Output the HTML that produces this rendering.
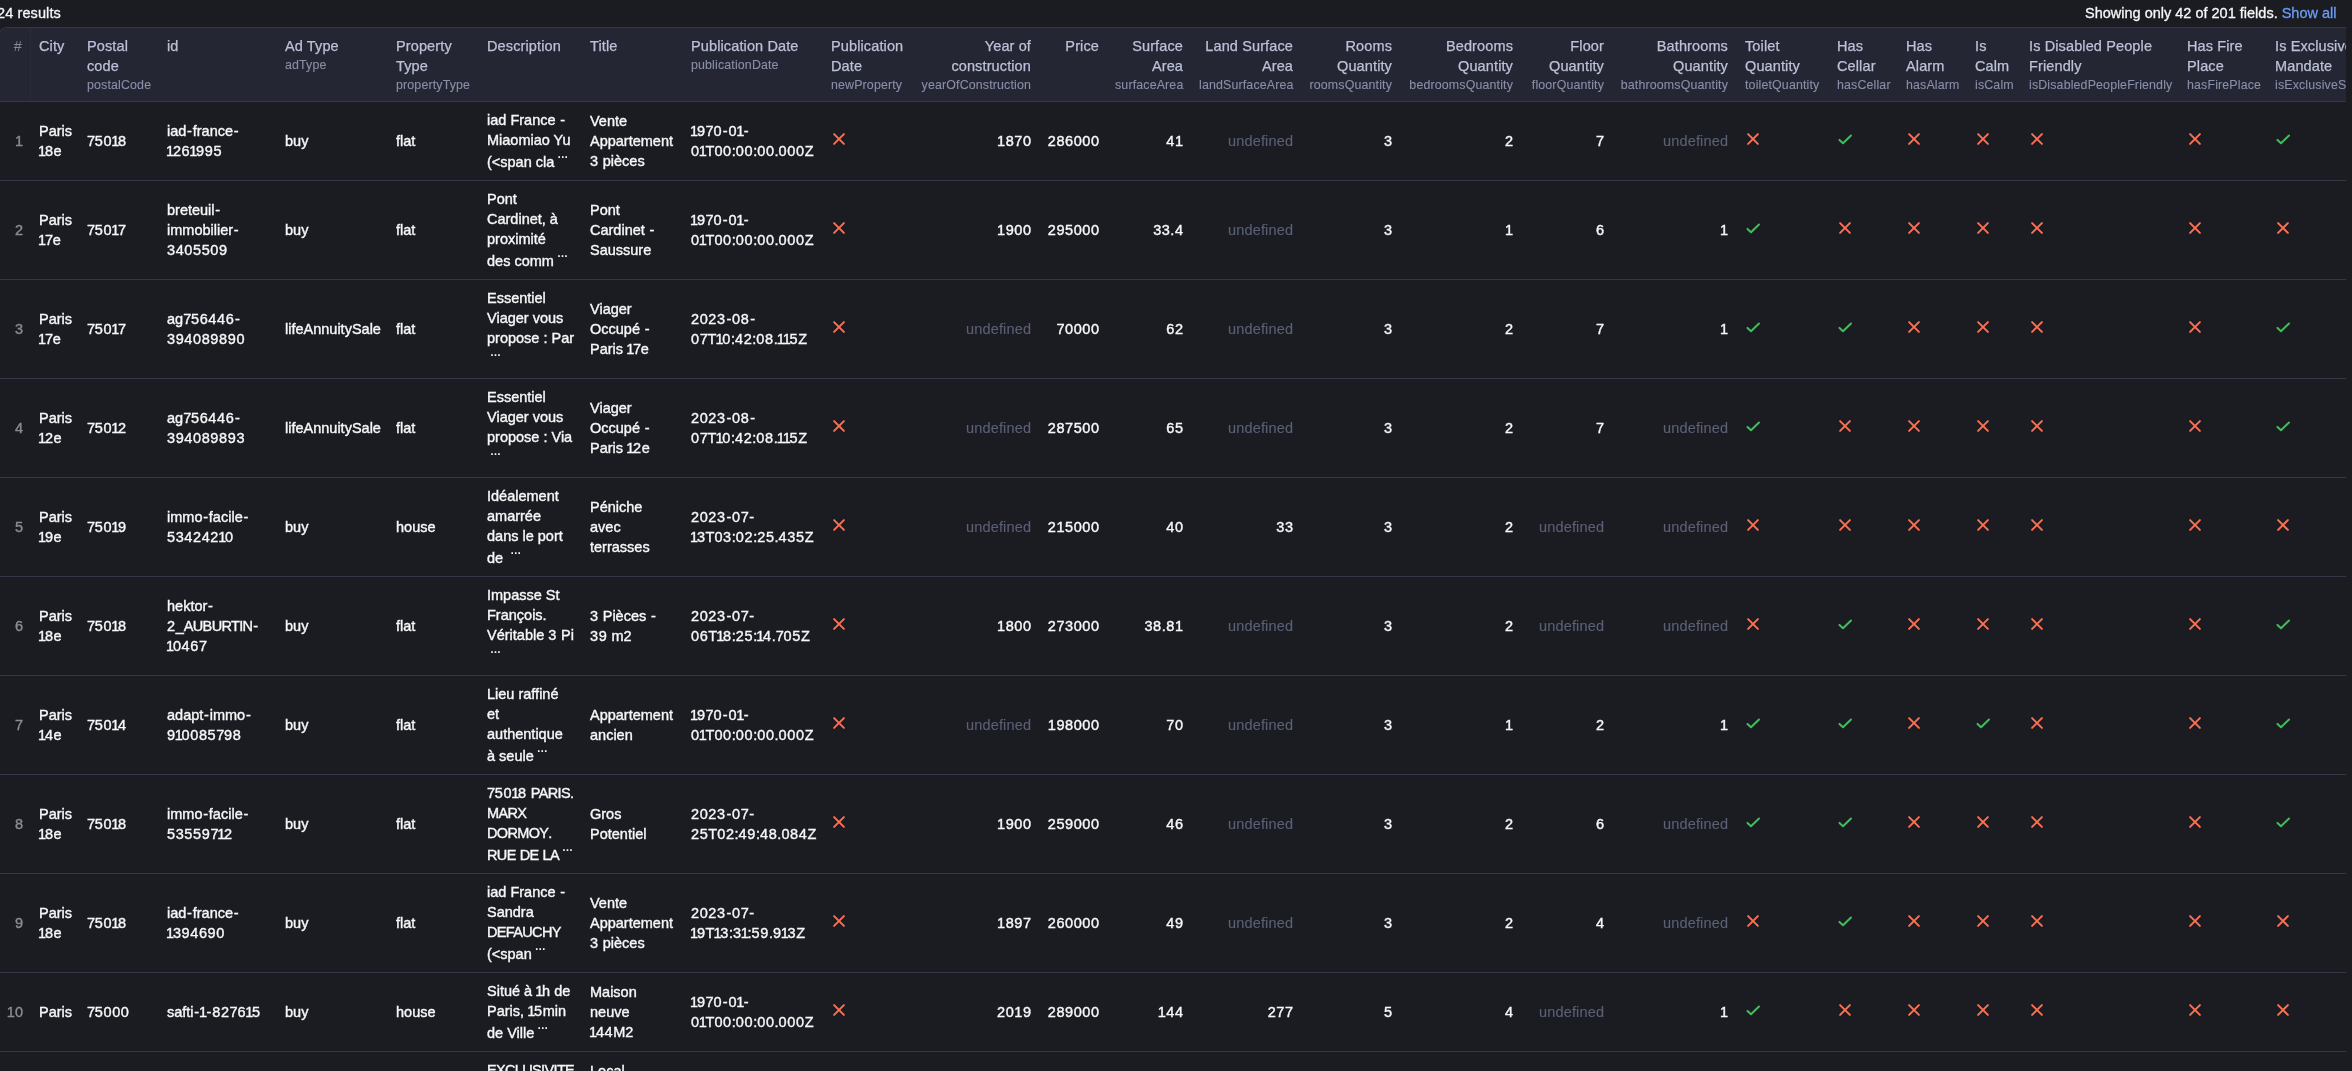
<!DOCTYPE html>
<html lang="fr"><head><meta charset="utf-8"><title>24 results</title>
<style>
html,body{margin:0;padding:0;background:#1b1c21;}
body{width:2352px;height:1071px;overflow:hidden;position:relative;font-family:"Liberation Sans",sans-serif;font-size:14.5px;line-height:20px;color:#f7f7f9;}
.top{will-change:transform;-webkit-text-stroke:.3px;position:absolute;top:3px;height:20px;white-space:nowrap;font-size:14.5px;}
.top a{color:#6c9cf8;text-decoration:none;}
.tbl{will-change:transform;position:absolute;left:-1px;top:27px;width:2346px;height:1100px;border-radius:8px 0 0 0;overflow:hidden;border-top:1px solid #353849;border-left:1px solid #353849;}
.hd{-webkit-text-stroke:.25px;letter-spacing:.12px;position:absolute;left:0;top:0;width:2352px;height:73px;background:#242633;border-bottom:1px solid #353849;color:#bdc1d8;}
.hc{position:absolute;top:8px;white-space:nowrap;padding:0 8px;box-sizing:border-box;}
.hc .sub{font-size:12.4px;line-height:16px;color:#8a8fa9;height:17px;padding-top:1px;letter-spacing:.15px;-webkit-text-stroke:.1px;}
.hc .l{height:20px;}
.r{text-align:right;}
.hn{color:#868893;-webkit-text-stroke:0;top:0;height:73px;padding-top:8px;border-right:1px solid #2a2c3a;}
.row{-webkit-text-stroke:.38px;position:absolute;left:0;width:2352px;border-bottom:1px solid #343748;}
.c{position:absolute;top:0;bottom:0;display:flex;flex-direction:column;justify-content:center;padding:0 8px;box-sizing:border-box;white-space:nowrap;}
.c .l{height:20px;}
.c.r{align-items:flex-end;}
.num{color:#8b8c93;align-items:flex-end;}
.u{color:#5b6077;-webkit-text-stroke:.1px;letter-spacing:.15px;margin-right:-.15px;}
.d{letter-spacing:.55px;margin-right:-.55px;-webkit-text-stroke:.4px;}
.up{letter-spacing:-.65px;}.dg{letter-spacing:.61px;}.d1{letter-spacing:-1.3px;margin-left:-.9px;}.d7{letter-spacing:-.26px;}.hy{letter-spacing:.8px;margin-left:.75px;}
.ic{display:block;position:relative;top:-2px;}
.dots{display:inline-block;font-size:11px;position:relative;top:-8.5px;margin-left:3px;letter-spacing:.2px;font-weight:bold;-webkit-text-stroke:0;}
.c .ll{height:22px;box-sizing:border-box;padding-top:1.5px;}
</style></head><body>

<div class="top" style="left:-3px;letter-spacing:.1px">24 results</div>
<div class="top" style="right:16px">Showing only 42 of 201 fields. <a>Show all</a></div>
<div class="tbl">
<div class="hd">
<div class="hc r hn" style="left:0px;width:31px"><div class="l">#</div></div>
<div class="hc" style="left:31px;width:48px"><div class="l">City</div></div>
<div class="hc" style="left:79px;width:80px"><div class="l">Postal</div><div class="l">code</div><div class="sub">postalCode</div></div>
<div class="hc" style="left:159px;width:118px"><div class="l">id</div></div>
<div class="hc" style="left:277px;width:111px"><div class="l">Ad Type</div><div class="sub">adType</div></div>
<div class="hc" style="left:388px;width:91px"><div class="l">Property</div><div class="l">Type</div><div class="sub">propertyType</div></div>
<div class="hc" style="left:479px;width:103px"><div class="l">Description</div></div>
<div class="hc" style="left:582px;width:101px"><div class="l">Title</div></div>
<div class="hc" style="left:683px;width:140px"><div class="l">Publication Date</div><div class="sub">publicationDate</div></div>
<div class="hc" style="left:823px;width:89px"><div class="l">Publication</div><div class="l">Date</div><div class="sub">newProperty</div></div>
<div class="hc r" style="left:912px;width:127px"><div class="l">Year of</div><div class="l">construction</div><div class="sub">yearOfConstruction</div></div>
<div class="hc r" style="left:1039px;width:68px"><div class="l">Price</div></div>
<div class="hc r" style="left:1107px;width:84px"><div class="l">Surface</div><div class="l">Area</div><div class="sub">surfaceArea</div></div>
<div class="hc r" style="left:1191px;width:110px"><div class="l">Land Surface</div><div class="l">Area</div><div class="sub">landSurfaceArea</div></div>
<div class="hc r" style="left:1301px;width:99px"><div class="l">Rooms</div><div class="l">Quantity</div><div class="sub">roomsQuantity</div></div>
<div class="hc r" style="left:1400px;width:121px"><div class="l">Bedrooms</div><div class="l">Quantity</div><div class="sub">bedroomsQuantity</div></div>
<div class="hc r" style="left:1521px;width:91px"><div class="l">Floor</div><div class="l">Quantity</div><div class="sub">floorQuantity</div></div>
<div class="hc r" style="left:1612px;width:124px"><div class="l">Bathrooms</div><div class="l">Quantity</div><div class="sub">bathroomsQuantity</div></div>
<div class="hc" style="left:1737px;width:92px"><div class="l">Toilet</div><div class="l">Quantity</div><div class="sub">toiletQuantity</div></div>
<div class="hc" style="left:1829px;width:69px"><div class="l">Has</div><div class="l">Cellar</div><div class="sub">hasCellar</div></div>
<div class="hc" style="left:1898px;width:69px"><div class="l">Has</div><div class="l">Alarm</div><div class="sub">hasAlarm</div></div>
<div class="hc" style="left:1967px;width:54px"><div class="l">Is</div><div class="l">Calm</div><div class="sub">isCalm</div></div>
<div class="hc" style="left:2021px;width:158px"><div class="l">Is Disabled People</div><div class="l">Friendly</div><div class="sub">isDisabledPeopleFriendly</div></div>
<div class="hc" style="left:2179px;width:88px"><div class="l">Has Fire</div><div class="l">Place</div><div class="sub">hasFirePlace</div></div>
<div class="hc" style="left:2267px;width:79px"><div class="l">Is Exclusive</div><div class="l">Mandate</div><div class="sub">isExclusiveSaleMandate</div></div>
</div>
<div class="row" style="top:74px;height:78px">
<div class="c num" style="left:0px;width:31px"><div class="l">1</div></div>
<div class="c" style="left:31px;width:48px"><div class="l">Paris</div><div class="l"><span class="d1">1</span><span class="dg">8</span>e</div></div>
<div class="c" style="left:79px;width:80px"><div class="l"><span class="d7">7</span><span class="dg">50</span><span class="d1">1</span><span class="dg">8</span></div></div>
<div class="c" style="left:159px;width:118px"><div class="l">iad<span class="hy">-</span>france<span class="hy">-</span></div><div class="l"><span class="d1">1</span><span class="dg">26</span><span class="d1">1</span><span class="dg">995</span></div></div>
<div class="c" style="left:277px;width:111px"><div class="l">buy</div></div>
<div class="c" style="left:388px;width:91px"><div class="l">flat</div></div>
<div class="c" style="left:479px;width:103px"><div class="l">iad France <span class="hy">-</span></div><div class="l">Miaomiao Yu</div><div class="l ll">(&lt;span cla<span class="dots">…</span></div></div>
<div class="c" style="left:582px;width:101px"><div class="l">Vente</div><div class="l">Appartement</div><div class="l"><span class="dg">3</span> pièces</div></div>
<div class="c" style="left:683px;width:140px"><div class="l"><span class="d1">1</span><span class="dg">9</span><span class="d7">7</span><span class="dg">0</span><span class="hy">-</span><span class="dg">0</span><span class="d1">1</span><span class="hy">-</span></div><div class="l"><span class="dg">0</span><span class="d1">1</span>T<span class="dg">00</span>:<span class="dg">00</span>:<span class="dg">00</span>.<span class="dg">000</span>Z</div></div>
<div class="c" style="left:823px;width:89px"><svg class="ic" width="16" height="16" viewBox="0 0 16 16"><path d="M3.1 3.1 L12.9 12.9 M12.9 3.1 L3.1 12.9" fill="none" stroke="#fb7053" stroke-width="2" stroke-linecap="round"/></svg></div>
<div class="c r" style="left:912px;width:127px"><div class="l d">1870</div></div>
<div class="c r" style="left:1039px;width:68px"><div class="l d">286000</div></div>
<div class="c r" style="left:1107px;width:84px"><div class="l d">41</div></div>
<div class="c r" style="left:1191px;width:110px"><div class="l u">undefined</div></div>
<div class="c r" style="left:1301px;width:99px"><div class="l d">3</div></div>
<div class="c r" style="left:1400px;width:121px"><div class="l d">2</div></div>
<div class="c r" style="left:1521px;width:91px"><div class="l d">7</div></div>
<div class="c r" style="left:1612px;width:124px"><div class="l u">undefined</div></div>
<div class="c" style="left:1737px;width:92px"><svg class="ic" width="16" height="16" viewBox="0 0 16 16"><path d="M3.1 3.1 L12.9 12.9 M12.9 3.1 L3.1 12.9" fill="none" stroke="#fb7053" stroke-width="2" stroke-linecap="round"/></svg></div>
<div class="c" style="left:1829px;width:69px"><svg class="ic" width="16" height="16" viewBox="0 0 16 16"><path d="M2.5 8.9 L6 12.2 L14 4.5" fill="none" stroke="#40be5c" stroke-width="2" stroke-linecap="round" stroke-linejoin="round"/></svg></div>
<div class="c" style="left:1898px;width:69px"><svg class="ic" width="16" height="16" viewBox="0 0 16 16"><path d="M3.1 3.1 L12.9 12.9 M12.9 3.1 L3.1 12.9" fill="none" stroke="#fb7053" stroke-width="2" stroke-linecap="round"/></svg></div>
<div class="c" style="left:1967px;width:54px"><svg class="ic" width="16" height="16" viewBox="0 0 16 16"><path d="M3.1 3.1 L12.9 12.9 M12.9 3.1 L3.1 12.9" fill="none" stroke="#fb7053" stroke-width="2" stroke-linecap="round"/></svg></div>
<div class="c" style="left:2021px;width:158px"><svg class="ic" width="16" height="16" viewBox="0 0 16 16"><path d="M3.1 3.1 L12.9 12.9 M12.9 3.1 L3.1 12.9" fill="none" stroke="#fb7053" stroke-width="2" stroke-linecap="round"/></svg></div>
<div class="c" style="left:2179px;width:88px"><svg class="ic" width="16" height="16" viewBox="0 0 16 16"><path d="M3.1 3.1 L12.9 12.9 M12.9 3.1 L3.1 12.9" fill="none" stroke="#fb7053" stroke-width="2" stroke-linecap="round"/></svg></div>
<div class="c" style="left:2267px;width:79px"><svg class="ic" width="16" height="16" viewBox="0 0 16 16"><path d="M2.5 8.9 L6 12.2 L14 4.5" fill="none" stroke="#40be5c" stroke-width="2" stroke-linecap="round" stroke-linejoin="round"/></svg></div>
</div>
<div class="row" style="top:153px;height:98px">
<div class="c num" style="left:0px;width:31px"><div class="l">2</div></div>
<div class="c" style="left:31px;width:48px"><div class="l">Paris</div><div class="l"><span class="d1">1</span><span class="d7">7</span>e</div></div>
<div class="c" style="left:79px;width:80px"><div class="l"><span class="d7">7</span><span class="dg">50</span><span class="d1">1</span><span class="d7">7</span></div></div>
<div class="c" style="left:159px;width:118px"><div class="l">breteuil<span class="hy">-</span></div><div class="l">immobilier<span class="hy">-</span></div><div class="l"><span class="dg">3405509</span></div></div>
<div class="c" style="left:277px;width:111px"><div class="l">buy</div></div>
<div class="c" style="left:388px;width:91px"><div class="l">flat</div></div>
<div class="c" style="left:479px;width:103px"><div class="l">Pont</div><div class="l">Cardinet, à</div><div class="l">proximité</div><div class="l ll">des comm<span class="dots">…</span></div></div>
<div class="c" style="left:582px;width:101px"><div class="l">Pont</div><div class="l">Cardinet <span class="hy">-</span></div><div class="l">Saussure</div></div>
<div class="c" style="left:683px;width:140px"><div class="l"><span class="d1">1</span><span class="dg">9</span><span class="d7">7</span><span class="dg">0</span><span class="hy">-</span><span class="dg">0</span><span class="d1">1</span><span class="hy">-</span></div><div class="l"><span class="dg">0</span><span class="d1">1</span>T<span class="dg">00</span>:<span class="dg">00</span>:<span class="dg">00</span>.<span class="dg">000</span>Z</div></div>
<div class="c" style="left:823px;width:89px"><svg class="ic" width="16" height="16" viewBox="0 0 16 16"><path d="M3.1 3.1 L12.9 12.9 M12.9 3.1 L3.1 12.9" fill="none" stroke="#fb7053" stroke-width="2" stroke-linecap="round"/></svg></div>
<div class="c r" style="left:912px;width:127px"><div class="l d">1900</div></div>
<div class="c r" style="left:1039px;width:68px"><div class="l d">295000</div></div>
<div class="c r" style="left:1107px;width:84px"><div class="l d">33.4</div></div>
<div class="c r" style="left:1191px;width:110px"><div class="l u">undefined</div></div>
<div class="c r" style="left:1301px;width:99px"><div class="l d">3</div></div>
<div class="c r" style="left:1400px;width:121px"><div class="l d">1</div></div>
<div class="c r" style="left:1521px;width:91px"><div class="l d">6</div></div>
<div class="c r" style="left:1612px;width:124px"><div class="l d">1</div></div>
<div class="c" style="left:1737px;width:92px"><svg class="ic" width="16" height="16" viewBox="0 0 16 16"><path d="M2.5 8.9 L6 12.2 L14 4.5" fill="none" stroke="#40be5c" stroke-width="2" stroke-linecap="round" stroke-linejoin="round"/></svg></div>
<div class="c" style="left:1829px;width:69px"><svg class="ic" width="16" height="16" viewBox="0 0 16 16"><path d="M3.1 3.1 L12.9 12.9 M12.9 3.1 L3.1 12.9" fill="none" stroke="#fb7053" stroke-width="2" stroke-linecap="round"/></svg></div>
<div class="c" style="left:1898px;width:69px"><svg class="ic" width="16" height="16" viewBox="0 0 16 16"><path d="M3.1 3.1 L12.9 12.9 M12.9 3.1 L3.1 12.9" fill="none" stroke="#fb7053" stroke-width="2" stroke-linecap="round"/></svg></div>
<div class="c" style="left:1967px;width:54px"><svg class="ic" width="16" height="16" viewBox="0 0 16 16"><path d="M3.1 3.1 L12.9 12.9 M12.9 3.1 L3.1 12.9" fill="none" stroke="#fb7053" stroke-width="2" stroke-linecap="round"/></svg></div>
<div class="c" style="left:2021px;width:158px"><svg class="ic" width="16" height="16" viewBox="0 0 16 16"><path d="M3.1 3.1 L12.9 12.9 M12.9 3.1 L3.1 12.9" fill="none" stroke="#fb7053" stroke-width="2" stroke-linecap="round"/></svg></div>
<div class="c" style="left:2179px;width:88px"><svg class="ic" width="16" height="16" viewBox="0 0 16 16"><path d="M3.1 3.1 L12.9 12.9 M12.9 3.1 L3.1 12.9" fill="none" stroke="#fb7053" stroke-width="2" stroke-linecap="round"/></svg></div>
<div class="c" style="left:2267px;width:79px"><svg class="ic" width="16" height="16" viewBox="0 0 16 16"><path d="M3.1 3.1 L12.9 12.9 M12.9 3.1 L3.1 12.9" fill="none" stroke="#fb7053" stroke-width="2" stroke-linecap="round"/></svg></div>
</div>
<div class="row" style="top:252px;height:98px">
<div class="c num" style="left:0px;width:31px"><div class="l">3</div></div>
<div class="c" style="left:31px;width:48px"><div class="l">Paris</div><div class="l"><span class="d1">1</span><span class="d7">7</span>e</div></div>
<div class="c" style="left:79px;width:80px"><div class="l"><span class="d7">7</span><span class="dg">50</span><span class="d1">1</span><span class="d7">7</span></div></div>
<div class="c" style="left:159px;width:118px"><div class="l">ag<span class="d7">7</span><span class="dg">56446</span><span class="hy">-</span></div><div class="l"><span class="dg">394089890</span></div></div>
<div class="c" style="left:277px;width:111px"><div class="l">lifeAnnuitySale</div></div>
<div class="c" style="left:388px;width:91px"><div class="l">flat</div></div>
<div class="c" style="left:479px;width:103px"><div class="l">Essentiel</div><div class="l">Viager vous</div><div class="l">propose : Par</div><div class="l ll"><span class="dots">…</span></div></div>
<div class="c" style="left:582px;width:101px"><div class="l">Viager</div><div class="l">Occupé <span class="hy">-</span></div><div class="l">Paris <span class="d1">1</span><span class="d7">7</span>e</div></div>
<div class="c" style="left:683px;width:140px"><div class="l"><span class="dg">2023</span><span class="hy">-</span><span class="dg">08</span><span class="hy">-</span></div><div class="l"><span class="dg">0</span><span class="d7">7</span>T<span class="d1">1</span><span class="dg">0</span>:<span class="dg">42</span>:<span class="dg">08</span>.<span class="d1">1</span><span class="d1">1</span><span class="dg">5</span>Z</div></div>
<div class="c" style="left:823px;width:89px"><svg class="ic" width="16" height="16" viewBox="0 0 16 16"><path d="M3.1 3.1 L12.9 12.9 M12.9 3.1 L3.1 12.9" fill="none" stroke="#fb7053" stroke-width="2" stroke-linecap="round"/></svg></div>
<div class="c r" style="left:912px;width:127px"><div class="l u">undefined</div></div>
<div class="c r" style="left:1039px;width:68px"><div class="l d">70000</div></div>
<div class="c r" style="left:1107px;width:84px"><div class="l d">62</div></div>
<div class="c r" style="left:1191px;width:110px"><div class="l u">undefined</div></div>
<div class="c r" style="left:1301px;width:99px"><div class="l d">3</div></div>
<div class="c r" style="left:1400px;width:121px"><div class="l d">2</div></div>
<div class="c r" style="left:1521px;width:91px"><div class="l d">7</div></div>
<div class="c r" style="left:1612px;width:124px"><div class="l d">1</div></div>
<div class="c" style="left:1737px;width:92px"><svg class="ic" width="16" height="16" viewBox="0 0 16 16"><path d="M2.5 8.9 L6 12.2 L14 4.5" fill="none" stroke="#40be5c" stroke-width="2" stroke-linecap="round" stroke-linejoin="round"/></svg></div>
<div class="c" style="left:1829px;width:69px"><svg class="ic" width="16" height="16" viewBox="0 0 16 16"><path d="M2.5 8.9 L6 12.2 L14 4.5" fill="none" stroke="#40be5c" stroke-width="2" stroke-linecap="round" stroke-linejoin="round"/></svg></div>
<div class="c" style="left:1898px;width:69px"><svg class="ic" width="16" height="16" viewBox="0 0 16 16"><path d="M3.1 3.1 L12.9 12.9 M12.9 3.1 L3.1 12.9" fill="none" stroke="#fb7053" stroke-width="2" stroke-linecap="round"/></svg></div>
<div class="c" style="left:1967px;width:54px"><svg class="ic" width="16" height="16" viewBox="0 0 16 16"><path d="M3.1 3.1 L12.9 12.9 M12.9 3.1 L3.1 12.9" fill="none" stroke="#fb7053" stroke-width="2" stroke-linecap="round"/></svg></div>
<div class="c" style="left:2021px;width:158px"><svg class="ic" width="16" height="16" viewBox="0 0 16 16"><path d="M3.1 3.1 L12.9 12.9 M12.9 3.1 L3.1 12.9" fill="none" stroke="#fb7053" stroke-width="2" stroke-linecap="round"/></svg></div>
<div class="c" style="left:2179px;width:88px"><svg class="ic" width="16" height="16" viewBox="0 0 16 16"><path d="M3.1 3.1 L12.9 12.9 M12.9 3.1 L3.1 12.9" fill="none" stroke="#fb7053" stroke-width="2" stroke-linecap="round"/></svg></div>
<div class="c" style="left:2267px;width:79px"><svg class="ic" width="16" height="16" viewBox="0 0 16 16"><path d="M2.5 8.9 L6 12.2 L14 4.5" fill="none" stroke="#40be5c" stroke-width="2" stroke-linecap="round" stroke-linejoin="round"/></svg></div>
</div>
<div class="row" style="top:351px;height:98px">
<div class="c num" style="left:0px;width:31px"><div class="l">4</div></div>
<div class="c" style="left:31px;width:48px"><div class="l">Paris</div><div class="l"><span class="d1">1</span><span class="dg">2</span>e</div></div>
<div class="c" style="left:79px;width:80px"><div class="l"><span class="d7">7</span><span class="dg">50</span><span class="d1">1</span><span class="dg">2</span></div></div>
<div class="c" style="left:159px;width:118px"><div class="l">ag<span class="d7">7</span><span class="dg">56446</span><span class="hy">-</span></div><div class="l"><span class="dg">394089893</span></div></div>
<div class="c" style="left:277px;width:111px"><div class="l">lifeAnnuitySale</div></div>
<div class="c" style="left:388px;width:91px"><div class="l">flat</div></div>
<div class="c" style="left:479px;width:103px"><div class="l">Essentiel</div><div class="l">Viager vous</div><div class="l">propose : Via</div><div class="l ll"><span class="dots">…</span></div></div>
<div class="c" style="left:582px;width:101px"><div class="l">Viager</div><div class="l">Occupé <span class="hy">-</span></div><div class="l">Paris <span class="d1">1</span><span class="dg">2</span>e</div></div>
<div class="c" style="left:683px;width:140px"><div class="l"><span class="dg">2023</span><span class="hy">-</span><span class="dg">08</span><span class="hy">-</span></div><div class="l"><span class="dg">0</span><span class="d7">7</span>T<span class="d1">1</span><span class="dg">0</span>:<span class="dg">42</span>:<span class="dg">08</span>.<span class="d1">1</span><span class="d1">1</span><span class="dg">5</span>Z</div></div>
<div class="c" style="left:823px;width:89px"><svg class="ic" width="16" height="16" viewBox="0 0 16 16"><path d="M3.1 3.1 L12.9 12.9 M12.9 3.1 L3.1 12.9" fill="none" stroke="#fb7053" stroke-width="2" stroke-linecap="round"/></svg></div>
<div class="c r" style="left:912px;width:127px"><div class="l u">undefined</div></div>
<div class="c r" style="left:1039px;width:68px"><div class="l d">287500</div></div>
<div class="c r" style="left:1107px;width:84px"><div class="l d">65</div></div>
<div class="c r" style="left:1191px;width:110px"><div class="l u">undefined</div></div>
<div class="c r" style="left:1301px;width:99px"><div class="l d">3</div></div>
<div class="c r" style="left:1400px;width:121px"><div class="l d">2</div></div>
<div class="c r" style="left:1521px;width:91px"><div class="l d">7</div></div>
<div class="c r" style="left:1612px;width:124px"><div class="l u">undefined</div></div>
<div class="c" style="left:1737px;width:92px"><svg class="ic" width="16" height="16" viewBox="0 0 16 16"><path d="M2.5 8.9 L6 12.2 L14 4.5" fill="none" stroke="#40be5c" stroke-width="2" stroke-linecap="round" stroke-linejoin="round"/></svg></div>
<div class="c" style="left:1829px;width:69px"><svg class="ic" width="16" height="16" viewBox="0 0 16 16"><path d="M3.1 3.1 L12.9 12.9 M12.9 3.1 L3.1 12.9" fill="none" stroke="#fb7053" stroke-width="2" stroke-linecap="round"/></svg></div>
<div class="c" style="left:1898px;width:69px"><svg class="ic" width="16" height="16" viewBox="0 0 16 16"><path d="M3.1 3.1 L12.9 12.9 M12.9 3.1 L3.1 12.9" fill="none" stroke="#fb7053" stroke-width="2" stroke-linecap="round"/></svg></div>
<div class="c" style="left:1967px;width:54px"><svg class="ic" width="16" height="16" viewBox="0 0 16 16"><path d="M3.1 3.1 L12.9 12.9 M12.9 3.1 L3.1 12.9" fill="none" stroke="#fb7053" stroke-width="2" stroke-linecap="round"/></svg></div>
<div class="c" style="left:2021px;width:158px"><svg class="ic" width="16" height="16" viewBox="0 0 16 16"><path d="M3.1 3.1 L12.9 12.9 M12.9 3.1 L3.1 12.9" fill="none" stroke="#fb7053" stroke-width="2" stroke-linecap="round"/></svg></div>
<div class="c" style="left:2179px;width:88px"><svg class="ic" width="16" height="16" viewBox="0 0 16 16"><path d="M3.1 3.1 L12.9 12.9 M12.9 3.1 L3.1 12.9" fill="none" stroke="#fb7053" stroke-width="2" stroke-linecap="round"/></svg></div>
<div class="c" style="left:2267px;width:79px"><svg class="ic" width="16" height="16" viewBox="0 0 16 16"><path d="M2.5 8.9 L6 12.2 L14 4.5" fill="none" stroke="#40be5c" stroke-width="2" stroke-linecap="round" stroke-linejoin="round"/></svg></div>
</div>
<div class="row" style="top:450px;height:98px">
<div class="c num" style="left:0px;width:31px"><div class="l">5</div></div>
<div class="c" style="left:31px;width:48px"><div class="l">Paris</div><div class="l"><span class="d1">1</span><span class="dg">9</span>e</div></div>
<div class="c" style="left:79px;width:80px"><div class="l"><span class="d7">7</span><span class="dg">50</span><span class="d1">1</span><span class="dg">9</span></div></div>
<div class="c" style="left:159px;width:118px"><div class="l">immo<span class="hy">-</span>facile<span class="hy">-</span></div><div class="l"><span class="dg">534242</span><span class="d1">1</span><span class="dg">0</span></div></div>
<div class="c" style="left:277px;width:111px"><div class="l">buy</div></div>
<div class="c" style="left:388px;width:91px"><div class="l">house</div></div>
<div class="c" style="left:479px;width:103px"><div class="l">Idéalement</div><div class="l">amarrée</div><div class="l">dans le port</div><div class="l ll">de <span class="dots">…</span></div></div>
<div class="c" style="left:582px;width:101px"><div class="l">Péniche</div><div class="l">avec</div><div class="l">terrasses</div></div>
<div class="c" style="left:683px;width:140px"><div class="l"><span class="dg">2023</span><span class="hy">-</span><span class="dg">0</span><span class="d7">7</span><span class="hy">-</span></div><div class="l"><span class="d1">1</span><span class="dg">3</span>T<span class="dg">03</span>:<span class="dg">02</span>:<span class="dg">25</span>.<span class="dg">435</span>Z</div></div>
<div class="c" style="left:823px;width:89px"><svg class="ic" width="16" height="16" viewBox="0 0 16 16"><path d="M3.1 3.1 L12.9 12.9 M12.9 3.1 L3.1 12.9" fill="none" stroke="#fb7053" stroke-width="2" stroke-linecap="round"/></svg></div>
<div class="c r" style="left:912px;width:127px"><div class="l u">undefined</div></div>
<div class="c r" style="left:1039px;width:68px"><div class="l d">215000</div></div>
<div class="c r" style="left:1107px;width:84px"><div class="l d">40</div></div>
<div class="c r" style="left:1191px;width:110px"><div class="l d">33</div></div>
<div class="c r" style="left:1301px;width:99px"><div class="l d">3</div></div>
<div class="c r" style="left:1400px;width:121px"><div class="l d">2</div></div>
<div class="c r" style="left:1521px;width:91px"><div class="l u">undefined</div></div>
<div class="c r" style="left:1612px;width:124px"><div class="l u">undefined</div></div>
<div class="c" style="left:1737px;width:92px"><svg class="ic" width="16" height="16" viewBox="0 0 16 16"><path d="M3.1 3.1 L12.9 12.9 M12.9 3.1 L3.1 12.9" fill="none" stroke="#fb7053" stroke-width="2" stroke-linecap="round"/></svg></div>
<div class="c" style="left:1829px;width:69px"><svg class="ic" width="16" height="16" viewBox="0 0 16 16"><path d="M3.1 3.1 L12.9 12.9 M12.9 3.1 L3.1 12.9" fill="none" stroke="#fb7053" stroke-width="2" stroke-linecap="round"/></svg></div>
<div class="c" style="left:1898px;width:69px"><svg class="ic" width="16" height="16" viewBox="0 0 16 16"><path d="M3.1 3.1 L12.9 12.9 M12.9 3.1 L3.1 12.9" fill="none" stroke="#fb7053" stroke-width="2" stroke-linecap="round"/></svg></div>
<div class="c" style="left:1967px;width:54px"><svg class="ic" width="16" height="16" viewBox="0 0 16 16"><path d="M3.1 3.1 L12.9 12.9 M12.9 3.1 L3.1 12.9" fill="none" stroke="#fb7053" stroke-width="2" stroke-linecap="round"/></svg></div>
<div class="c" style="left:2021px;width:158px"><svg class="ic" width="16" height="16" viewBox="0 0 16 16"><path d="M3.1 3.1 L12.9 12.9 M12.9 3.1 L3.1 12.9" fill="none" stroke="#fb7053" stroke-width="2" stroke-linecap="round"/></svg></div>
<div class="c" style="left:2179px;width:88px"><svg class="ic" width="16" height="16" viewBox="0 0 16 16"><path d="M3.1 3.1 L12.9 12.9 M12.9 3.1 L3.1 12.9" fill="none" stroke="#fb7053" stroke-width="2" stroke-linecap="round"/></svg></div>
<div class="c" style="left:2267px;width:79px"><svg class="ic" width="16" height="16" viewBox="0 0 16 16"><path d="M3.1 3.1 L12.9 12.9 M12.9 3.1 L3.1 12.9" fill="none" stroke="#fb7053" stroke-width="2" stroke-linecap="round"/></svg></div>
</div>
<div class="row" style="top:549px;height:98px">
<div class="c num" style="left:0px;width:31px"><div class="l">6</div></div>
<div class="c" style="left:31px;width:48px"><div class="l">Paris</div><div class="l"><span class="d1">1</span><span class="dg">8</span>e</div></div>
<div class="c" style="left:79px;width:80px"><div class="l"><span class="d7">7</span><span class="dg">50</span><span class="d1">1</span><span class="dg">8</span></div></div>
<div class="c" style="left:159px;width:118px"><div class="l">hektor<span class="hy">-</span></div><div class="l"><span class="dg">2</span>_<span class="up">AUBURTIN</span><span class="hy">-</span></div><div class="l"><span class="d1">1</span><span class="dg">046</span><span class="d7">7</span></div></div>
<div class="c" style="left:277px;width:111px"><div class="l">buy</div></div>
<div class="c" style="left:388px;width:91px"><div class="l">flat</div></div>
<div class="c" style="left:479px;width:103px"><div class="l">Impasse St</div><div class="l">François.</div><div class="l">Véritable <span class="dg">3</span> Pi</div><div class="l ll"><span class="dots">…</span></div></div>
<div class="c" style="left:582px;width:101px"><div class="l"><span class="dg">3</span> Pièces <span class="hy">-</span></div><div class="l"><span class="dg">39</span> m<span class="dg">2</span></div></div>
<div class="c" style="left:683px;width:140px"><div class="l"><span class="dg">2023</span><span class="hy">-</span><span class="dg">0</span><span class="d7">7</span><span class="hy">-</span></div><div class="l"><span class="dg">06</span>T<span class="d1">1</span><span class="dg">8</span>:<span class="dg">25</span>:<span class="d1">1</span><span class="dg">4</span>.<span class="d7">7</span><span class="dg">05</span>Z</div></div>
<div class="c" style="left:823px;width:89px"><svg class="ic" width="16" height="16" viewBox="0 0 16 16"><path d="M3.1 3.1 L12.9 12.9 M12.9 3.1 L3.1 12.9" fill="none" stroke="#fb7053" stroke-width="2" stroke-linecap="round"/></svg></div>
<div class="c r" style="left:912px;width:127px"><div class="l d">1800</div></div>
<div class="c r" style="left:1039px;width:68px"><div class="l d">273000</div></div>
<div class="c r" style="left:1107px;width:84px"><div class="l d">38.81</div></div>
<div class="c r" style="left:1191px;width:110px"><div class="l u">undefined</div></div>
<div class="c r" style="left:1301px;width:99px"><div class="l d">3</div></div>
<div class="c r" style="left:1400px;width:121px"><div class="l d">2</div></div>
<div class="c r" style="left:1521px;width:91px"><div class="l u">undefined</div></div>
<div class="c r" style="left:1612px;width:124px"><div class="l u">undefined</div></div>
<div class="c" style="left:1737px;width:92px"><svg class="ic" width="16" height="16" viewBox="0 0 16 16"><path d="M3.1 3.1 L12.9 12.9 M12.9 3.1 L3.1 12.9" fill="none" stroke="#fb7053" stroke-width="2" stroke-linecap="round"/></svg></div>
<div class="c" style="left:1829px;width:69px"><svg class="ic" width="16" height="16" viewBox="0 0 16 16"><path d="M2.5 8.9 L6 12.2 L14 4.5" fill="none" stroke="#40be5c" stroke-width="2" stroke-linecap="round" stroke-linejoin="round"/></svg></div>
<div class="c" style="left:1898px;width:69px"><svg class="ic" width="16" height="16" viewBox="0 0 16 16"><path d="M3.1 3.1 L12.9 12.9 M12.9 3.1 L3.1 12.9" fill="none" stroke="#fb7053" stroke-width="2" stroke-linecap="round"/></svg></div>
<div class="c" style="left:1967px;width:54px"><svg class="ic" width="16" height="16" viewBox="0 0 16 16"><path d="M3.1 3.1 L12.9 12.9 M12.9 3.1 L3.1 12.9" fill="none" stroke="#fb7053" stroke-width="2" stroke-linecap="round"/></svg></div>
<div class="c" style="left:2021px;width:158px"><svg class="ic" width="16" height="16" viewBox="0 0 16 16"><path d="M3.1 3.1 L12.9 12.9 M12.9 3.1 L3.1 12.9" fill="none" stroke="#fb7053" stroke-width="2" stroke-linecap="round"/></svg></div>
<div class="c" style="left:2179px;width:88px"><svg class="ic" width="16" height="16" viewBox="0 0 16 16"><path d="M3.1 3.1 L12.9 12.9 M12.9 3.1 L3.1 12.9" fill="none" stroke="#fb7053" stroke-width="2" stroke-linecap="round"/></svg></div>
<div class="c" style="left:2267px;width:79px"><svg class="ic" width="16" height="16" viewBox="0 0 16 16"><path d="M2.5 8.9 L6 12.2 L14 4.5" fill="none" stroke="#40be5c" stroke-width="2" stroke-linecap="round" stroke-linejoin="round"/></svg></div>
</div>
<div class="row" style="top:648px;height:98px">
<div class="c num" style="left:0px;width:31px"><div class="l">7</div></div>
<div class="c" style="left:31px;width:48px"><div class="l">Paris</div><div class="l"><span class="d1">1</span><span class="dg">4</span>e</div></div>
<div class="c" style="left:79px;width:80px"><div class="l"><span class="d7">7</span><span class="dg">50</span><span class="d1">1</span><span class="dg">4</span></div></div>
<div class="c" style="left:159px;width:118px"><div class="l">adapt<span class="hy">-</span>immo<span class="hy">-</span></div><div class="l"><span class="dg">9</span><span class="d1">1</span><span class="dg">0085</span><span class="d7">7</span><span class="dg">98</span></div></div>
<div class="c" style="left:277px;width:111px"><div class="l">buy</div></div>
<div class="c" style="left:388px;width:91px"><div class="l">flat</div></div>
<div class="c" style="left:479px;width:103px"><div class="l">Lieu raffiné</div><div class="l">et</div><div class="l">authentique</div><div class="l ll">à seule<span class="dots">…</span></div></div>
<div class="c" style="left:582px;width:101px"><div class="l">Appartement</div><div class="l">ancien</div></div>
<div class="c" style="left:683px;width:140px"><div class="l"><span class="d1">1</span><span class="dg">9</span><span class="d7">7</span><span class="dg">0</span><span class="hy">-</span><span class="dg">0</span><span class="d1">1</span><span class="hy">-</span></div><div class="l"><span class="dg">0</span><span class="d1">1</span>T<span class="dg">00</span>:<span class="dg">00</span>:<span class="dg">00</span>.<span class="dg">000</span>Z</div></div>
<div class="c" style="left:823px;width:89px"><svg class="ic" width="16" height="16" viewBox="0 0 16 16"><path d="M3.1 3.1 L12.9 12.9 M12.9 3.1 L3.1 12.9" fill="none" stroke="#fb7053" stroke-width="2" stroke-linecap="round"/></svg></div>
<div class="c r" style="left:912px;width:127px"><div class="l u">undefined</div></div>
<div class="c r" style="left:1039px;width:68px"><div class="l d">198000</div></div>
<div class="c r" style="left:1107px;width:84px"><div class="l d">70</div></div>
<div class="c r" style="left:1191px;width:110px"><div class="l u">undefined</div></div>
<div class="c r" style="left:1301px;width:99px"><div class="l d">3</div></div>
<div class="c r" style="left:1400px;width:121px"><div class="l d">1</div></div>
<div class="c r" style="left:1521px;width:91px"><div class="l d">2</div></div>
<div class="c r" style="left:1612px;width:124px"><div class="l d">1</div></div>
<div class="c" style="left:1737px;width:92px"><svg class="ic" width="16" height="16" viewBox="0 0 16 16"><path d="M2.5 8.9 L6 12.2 L14 4.5" fill="none" stroke="#40be5c" stroke-width="2" stroke-linecap="round" stroke-linejoin="round"/></svg></div>
<div class="c" style="left:1829px;width:69px"><svg class="ic" width="16" height="16" viewBox="0 0 16 16"><path d="M2.5 8.9 L6 12.2 L14 4.5" fill="none" stroke="#40be5c" stroke-width="2" stroke-linecap="round" stroke-linejoin="round"/></svg></div>
<div class="c" style="left:1898px;width:69px"><svg class="ic" width="16" height="16" viewBox="0 0 16 16"><path d="M3.1 3.1 L12.9 12.9 M12.9 3.1 L3.1 12.9" fill="none" stroke="#fb7053" stroke-width="2" stroke-linecap="round"/></svg></div>
<div class="c" style="left:1967px;width:54px"><svg class="ic" width="16" height="16" viewBox="0 0 16 16"><path d="M2.5 8.9 L6 12.2 L14 4.5" fill="none" stroke="#40be5c" stroke-width="2" stroke-linecap="round" stroke-linejoin="round"/></svg></div>
<div class="c" style="left:2021px;width:158px"><svg class="ic" width="16" height="16" viewBox="0 0 16 16"><path d="M3.1 3.1 L12.9 12.9 M12.9 3.1 L3.1 12.9" fill="none" stroke="#fb7053" stroke-width="2" stroke-linecap="round"/></svg></div>
<div class="c" style="left:2179px;width:88px"><svg class="ic" width="16" height="16" viewBox="0 0 16 16"><path d="M3.1 3.1 L12.9 12.9 M12.9 3.1 L3.1 12.9" fill="none" stroke="#fb7053" stroke-width="2" stroke-linecap="round"/></svg></div>
<div class="c" style="left:2267px;width:79px"><svg class="ic" width="16" height="16" viewBox="0 0 16 16"><path d="M2.5 8.9 L6 12.2 L14 4.5" fill="none" stroke="#40be5c" stroke-width="2" stroke-linecap="round" stroke-linejoin="round"/></svg></div>
</div>
<div class="row" style="top:747px;height:98px">
<div class="c num" style="left:0px;width:31px"><div class="l">8</div></div>
<div class="c" style="left:31px;width:48px"><div class="l">Paris</div><div class="l"><span class="d1">1</span><span class="dg">8</span>e</div></div>
<div class="c" style="left:79px;width:80px"><div class="l"><span class="d7">7</span><span class="dg">50</span><span class="d1">1</span><span class="dg">8</span></div></div>
<div class="c" style="left:159px;width:118px"><div class="l">immo<span class="hy">-</span>facile<span class="hy">-</span></div><div class="l"><span class="dg">53559</span><span class="d7">7</span><span class="d1">1</span><span class="dg">2</span></div></div>
<div class="c" style="left:277px;width:111px"><div class="l">buy</div></div>
<div class="c" style="left:388px;width:91px"><div class="l">flat</div></div>
<div class="c" style="left:479px;width:103px"><div class="l"><span class="d7">7</span><span class="dg">50</span><span class="d1">1</span><span class="dg">8</span> <span class="up">PARIS</span>.</div><div class="l"><span class="up">MARX</span></div><div class="l"><span class="up">DORMOY</span>.</div><div class="l ll"><span class="up">RUE</span> <span class="up">DE</span> <span class="up">LA</span><span class="dots">…</span></div></div>
<div class="c" style="left:582px;width:101px"><div class="l">Gros</div><div class="l">Potentiel</div></div>
<div class="c" style="left:683px;width:140px"><div class="l"><span class="dg">2023</span><span class="hy">-</span><span class="dg">0</span><span class="d7">7</span><span class="hy">-</span></div><div class="l"><span class="dg">25</span>T<span class="dg">02</span>:<span class="dg">49</span>:<span class="dg">48</span>.<span class="dg">084</span>Z</div></div>
<div class="c" style="left:823px;width:89px"><svg class="ic" width="16" height="16" viewBox="0 0 16 16"><path d="M3.1 3.1 L12.9 12.9 M12.9 3.1 L3.1 12.9" fill="none" stroke="#fb7053" stroke-width="2" stroke-linecap="round"/></svg></div>
<div class="c r" style="left:912px;width:127px"><div class="l d">1900</div></div>
<div class="c r" style="left:1039px;width:68px"><div class="l d">259000</div></div>
<div class="c r" style="left:1107px;width:84px"><div class="l d">46</div></div>
<div class="c r" style="left:1191px;width:110px"><div class="l u">undefined</div></div>
<div class="c r" style="left:1301px;width:99px"><div class="l d">3</div></div>
<div class="c r" style="left:1400px;width:121px"><div class="l d">2</div></div>
<div class="c r" style="left:1521px;width:91px"><div class="l d">6</div></div>
<div class="c r" style="left:1612px;width:124px"><div class="l u">undefined</div></div>
<div class="c" style="left:1737px;width:92px"><svg class="ic" width="16" height="16" viewBox="0 0 16 16"><path d="M2.5 8.9 L6 12.2 L14 4.5" fill="none" stroke="#40be5c" stroke-width="2" stroke-linecap="round" stroke-linejoin="round"/></svg></div>
<div class="c" style="left:1829px;width:69px"><svg class="ic" width="16" height="16" viewBox="0 0 16 16"><path d="M2.5 8.9 L6 12.2 L14 4.5" fill="none" stroke="#40be5c" stroke-width="2" stroke-linecap="round" stroke-linejoin="round"/></svg></div>
<div class="c" style="left:1898px;width:69px"><svg class="ic" width="16" height="16" viewBox="0 0 16 16"><path d="M3.1 3.1 L12.9 12.9 M12.9 3.1 L3.1 12.9" fill="none" stroke="#fb7053" stroke-width="2" stroke-linecap="round"/></svg></div>
<div class="c" style="left:1967px;width:54px"><svg class="ic" width="16" height="16" viewBox="0 0 16 16"><path d="M3.1 3.1 L12.9 12.9 M12.9 3.1 L3.1 12.9" fill="none" stroke="#fb7053" stroke-width="2" stroke-linecap="round"/></svg></div>
<div class="c" style="left:2021px;width:158px"><svg class="ic" width="16" height="16" viewBox="0 0 16 16"><path d="M3.1 3.1 L12.9 12.9 M12.9 3.1 L3.1 12.9" fill="none" stroke="#fb7053" stroke-width="2" stroke-linecap="round"/></svg></div>
<div class="c" style="left:2179px;width:88px"><svg class="ic" width="16" height="16" viewBox="0 0 16 16"><path d="M3.1 3.1 L12.9 12.9 M12.9 3.1 L3.1 12.9" fill="none" stroke="#fb7053" stroke-width="2" stroke-linecap="round"/></svg></div>
<div class="c" style="left:2267px;width:79px"><svg class="ic" width="16" height="16" viewBox="0 0 16 16"><path d="M2.5 8.9 L6 12.2 L14 4.5" fill="none" stroke="#40be5c" stroke-width="2" stroke-linecap="round" stroke-linejoin="round"/></svg></div>
</div>
<div class="row" style="top:846px;height:98px">
<div class="c num" style="left:0px;width:31px"><div class="l">9</div></div>
<div class="c" style="left:31px;width:48px"><div class="l">Paris</div><div class="l"><span class="d1">1</span><span class="dg">8</span>e</div></div>
<div class="c" style="left:79px;width:80px"><div class="l"><span class="d7">7</span><span class="dg">50</span><span class="d1">1</span><span class="dg">8</span></div></div>
<div class="c" style="left:159px;width:118px"><div class="l">iad<span class="hy">-</span>france<span class="hy">-</span></div><div class="l"><span class="d1">1</span><span class="dg">394690</span></div></div>
<div class="c" style="left:277px;width:111px"><div class="l">buy</div></div>
<div class="c" style="left:388px;width:91px"><div class="l">flat</div></div>
<div class="c" style="left:479px;width:103px"><div class="l">iad France <span class="hy">-</span></div><div class="l">Sandra</div><div class="l"><span class="up">DEFAUCHY</span></div><div class="l ll">(&lt;span<span class="dots">…</span></div></div>
<div class="c" style="left:582px;width:101px"><div class="l">Vente</div><div class="l">Appartement</div><div class="l"><span class="dg">3</span> pièces</div></div>
<div class="c" style="left:683px;width:140px"><div class="l"><span class="dg">2023</span><span class="hy">-</span><span class="dg">0</span><span class="d7">7</span><span class="hy">-</span></div><div class="l"><span class="d1">1</span><span class="dg">9</span>T<span class="d1">1</span><span class="dg">3</span>:<span class="dg">3</span><span class="d1">1</span>:<span class="dg">59</span>.<span class="dg">9</span><span class="d1">1</span><span class="dg">3</span>Z</div></div>
<div class="c" style="left:823px;width:89px"><svg class="ic" width="16" height="16" viewBox="0 0 16 16"><path d="M3.1 3.1 L12.9 12.9 M12.9 3.1 L3.1 12.9" fill="none" stroke="#fb7053" stroke-width="2" stroke-linecap="round"/></svg></div>
<div class="c r" style="left:912px;width:127px"><div class="l d">1897</div></div>
<div class="c r" style="left:1039px;width:68px"><div class="l d">260000</div></div>
<div class="c r" style="left:1107px;width:84px"><div class="l d">49</div></div>
<div class="c r" style="left:1191px;width:110px"><div class="l u">undefined</div></div>
<div class="c r" style="left:1301px;width:99px"><div class="l d">3</div></div>
<div class="c r" style="left:1400px;width:121px"><div class="l d">2</div></div>
<div class="c r" style="left:1521px;width:91px"><div class="l d">4</div></div>
<div class="c r" style="left:1612px;width:124px"><div class="l u">undefined</div></div>
<div class="c" style="left:1737px;width:92px"><svg class="ic" width="16" height="16" viewBox="0 0 16 16"><path d="M3.1 3.1 L12.9 12.9 M12.9 3.1 L3.1 12.9" fill="none" stroke="#fb7053" stroke-width="2" stroke-linecap="round"/></svg></div>
<div class="c" style="left:1829px;width:69px"><svg class="ic" width="16" height="16" viewBox="0 0 16 16"><path d="M2.5 8.9 L6 12.2 L14 4.5" fill="none" stroke="#40be5c" stroke-width="2" stroke-linecap="round" stroke-linejoin="round"/></svg></div>
<div class="c" style="left:1898px;width:69px"><svg class="ic" width="16" height="16" viewBox="0 0 16 16"><path d="M3.1 3.1 L12.9 12.9 M12.9 3.1 L3.1 12.9" fill="none" stroke="#fb7053" stroke-width="2" stroke-linecap="round"/></svg></div>
<div class="c" style="left:1967px;width:54px"><svg class="ic" width="16" height="16" viewBox="0 0 16 16"><path d="M3.1 3.1 L12.9 12.9 M12.9 3.1 L3.1 12.9" fill="none" stroke="#fb7053" stroke-width="2" stroke-linecap="round"/></svg></div>
<div class="c" style="left:2021px;width:158px"><svg class="ic" width="16" height="16" viewBox="0 0 16 16"><path d="M3.1 3.1 L12.9 12.9 M12.9 3.1 L3.1 12.9" fill="none" stroke="#fb7053" stroke-width="2" stroke-linecap="round"/></svg></div>
<div class="c" style="left:2179px;width:88px"><svg class="ic" width="16" height="16" viewBox="0 0 16 16"><path d="M3.1 3.1 L12.9 12.9 M12.9 3.1 L3.1 12.9" fill="none" stroke="#fb7053" stroke-width="2" stroke-linecap="round"/></svg></div>
<div class="c" style="left:2267px;width:79px"><svg class="ic" width="16" height="16" viewBox="0 0 16 16"><path d="M3.1 3.1 L12.9 12.9 M12.9 3.1 L3.1 12.9" fill="none" stroke="#fb7053" stroke-width="2" stroke-linecap="round"/></svg></div>
</div>
<div class="row" style="top:945px;height:78px">
<div class="c num" style="left:0px;width:31px"><div class="l">10</div></div>
<div class="c" style="left:31px;width:48px"><div class="l">Paris</div></div>
<div class="c" style="left:79px;width:80px"><div class="l"><span class="d7">7</span><span class="dg">5000</span></div></div>
<div class="c" style="left:159px;width:118px"><div class="l">safti<span class="hy">-</span><span class="d1">1</span><span class="hy">-</span><span class="dg">82</span><span class="d7">7</span><span class="dg">6</span><span class="d1">1</span><span class="dg">5</span></div></div>
<div class="c" style="left:277px;width:111px"><div class="l">buy</div></div>
<div class="c" style="left:388px;width:91px"><div class="l">house</div></div>
<div class="c" style="left:479px;width:103px"><div class="l">Situé à <span class="d1">1</span>h de</div><div class="l">Paris, <span class="d1">1</span><span class="dg">5</span>min</div><div class="l ll">de Ville<span class="dots">…</span></div></div>
<div class="c" style="left:582px;width:101px"><div class="l">Maison</div><div class="l">neuve</div><div class="l"><span class="d1">1</span><span class="dg">44</span>M<span class="dg">2</span></div></div>
<div class="c" style="left:683px;width:140px"><div class="l"><span class="d1">1</span><span class="dg">9</span><span class="d7">7</span><span class="dg">0</span><span class="hy">-</span><span class="dg">0</span><span class="d1">1</span><span class="hy">-</span></div><div class="l"><span class="dg">0</span><span class="d1">1</span>T<span class="dg">00</span>:<span class="dg">00</span>:<span class="dg">00</span>.<span class="dg">000</span>Z</div></div>
<div class="c" style="left:823px;width:89px"><svg class="ic" width="16" height="16" viewBox="0 0 16 16"><path d="M3.1 3.1 L12.9 12.9 M12.9 3.1 L3.1 12.9" fill="none" stroke="#fb7053" stroke-width="2" stroke-linecap="round"/></svg></div>
<div class="c r" style="left:912px;width:127px"><div class="l d">2019</div></div>
<div class="c r" style="left:1039px;width:68px"><div class="l d">289000</div></div>
<div class="c r" style="left:1107px;width:84px"><div class="l d">144</div></div>
<div class="c r" style="left:1191px;width:110px"><div class="l d">277</div></div>
<div class="c r" style="left:1301px;width:99px"><div class="l d">5</div></div>
<div class="c r" style="left:1400px;width:121px"><div class="l d">4</div></div>
<div class="c r" style="left:1521px;width:91px"><div class="l u">undefined</div></div>
<div class="c r" style="left:1612px;width:124px"><div class="l d">1</div></div>
<div class="c" style="left:1737px;width:92px"><svg class="ic" width="16" height="16" viewBox="0 0 16 16"><path d="M2.5 8.9 L6 12.2 L14 4.5" fill="none" stroke="#40be5c" stroke-width="2" stroke-linecap="round" stroke-linejoin="round"/></svg></div>
<div class="c" style="left:1829px;width:69px"><svg class="ic" width="16" height="16" viewBox="0 0 16 16"><path d="M3.1 3.1 L12.9 12.9 M12.9 3.1 L3.1 12.9" fill="none" stroke="#fb7053" stroke-width="2" stroke-linecap="round"/></svg></div>
<div class="c" style="left:1898px;width:69px"><svg class="ic" width="16" height="16" viewBox="0 0 16 16"><path d="M3.1 3.1 L12.9 12.9 M12.9 3.1 L3.1 12.9" fill="none" stroke="#fb7053" stroke-width="2" stroke-linecap="round"/></svg></div>
<div class="c" style="left:1967px;width:54px"><svg class="ic" width="16" height="16" viewBox="0 0 16 16"><path d="M3.1 3.1 L12.9 12.9 M12.9 3.1 L3.1 12.9" fill="none" stroke="#fb7053" stroke-width="2" stroke-linecap="round"/></svg></div>
<div class="c" style="left:2021px;width:158px"><svg class="ic" width="16" height="16" viewBox="0 0 16 16"><path d="M3.1 3.1 L12.9 12.9 M12.9 3.1 L3.1 12.9" fill="none" stroke="#fb7053" stroke-width="2" stroke-linecap="round"/></svg></div>
<div class="c" style="left:2179px;width:88px"><svg class="ic" width="16" height="16" viewBox="0 0 16 16"><path d="M3.1 3.1 L12.9 12.9 M12.9 3.1 L3.1 12.9" fill="none" stroke="#fb7053" stroke-width="2" stroke-linecap="round"/></svg></div>
<div class="c" style="left:2267px;width:79px"><svg class="ic" width="16" height="16" viewBox="0 0 16 16"><path d="M3.1 3.1 L12.9 12.9 M12.9 3.1 L3.1 12.9" fill="none" stroke="#fb7053" stroke-width="2" stroke-linecap="round"/></svg></div>
</div>
<div class="row" style="top:1024px;height:98px">
<div class="c num" style="left:0px;width:31px"><div class="l">11</div></div>
<div class="c" style="left:31px;width:48px"><div class="l">Paris</div><div class="l"><span class="d1">1</span><span class="d1">1</span>e</div></div>
<div class="c" style="left:79px;width:80px"><div class="l"><span class="d7">7</span><span class="dg">50</span><span class="d1">1</span><span class="d1">1</span></div></div>
<div class="c" style="left:159px;width:118px"><div class="l">immo<span class="hy">-</span>facile<span class="hy">-</span></div><div class="l"><span class="dg">535</span><span class="d1">1</span><span class="dg">2345</span></div></div>
<div class="c" style="left:277px;width:111px"><div class="l">buy</div></div>
<div class="c" style="left:388px;width:91px"><div class="l">flat</div></div>
<div class="c" style="left:479px;width:103px"><div class="l"><span class="up">EXCLUSIVITE</span></div><div class="l">Local</div><div class="l">commercial</div><div class="l ll">à vendre<span class="dots">…</span></div></div>
<div class="c" style="left:582px;width:101px"><div class="l">Local</div><div class="l">commercial</div><div class="l">à vendre</div><div class="l">Paris <span class="d1">1</span><span class="d1">1</span>e</div></div>
<div class="c" style="left:683px;width:140px"><div class="l"><span class="dg">2023</span><span class="hy">-</span><span class="dg">0</span><span class="d7">7</span><span class="hy">-</span></div><div class="l"><span class="dg">2</span><span class="d1">1</span>T<span class="dg">09</span>:<span class="d1">1</span><span class="dg">2</span>:<span class="dg">4</span><span class="d1">1</span>.<span class="dg">220</span>Z</div></div>
<div class="c" style="left:823px;width:89px"><svg class="ic" width="16" height="16" viewBox="0 0 16 16"><path d="M3.1 3.1 L12.9 12.9 M12.9 3.1 L3.1 12.9" fill="none" stroke="#fb7053" stroke-width="2" stroke-linecap="round"/></svg></div>
<div class="c r" style="left:912px;width:127px"><div class="l u">undefined</div></div>
<div class="c r" style="left:1039px;width:68px"><div class="l d">250000</div></div>
<div class="c r" style="left:1107px;width:84px"><div class="l d">52</div></div>
<div class="c r" style="left:1191px;width:110px"><div class="l u">undefined</div></div>
<div class="c r" style="left:1301px;width:99px"><div class="l d">3</div></div>
<div class="c r" style="left:1400px;width:121px"><div class="l d">2</div></div>
<div class="c r" style="left:1521px;width:91px"><div class="l d">1</div></div>
<div class="c r" style="left:1612px;width:124px"><div class="l u">undefined</div></div>
<div class="c" style="left:1737px;width:92px"><svg class="ic" width="16" height="16" viewBox="0 0 16 16"><path d="M2.5 8.9 L6 12.2 L14 4.5" fill="none" stroke="#40be5c" stroke-width="2" stroke-linecap="round" stroke-linejoin="round"/></svg></div>
<div class="c" style="left:1829px;width:69px"><svg class="ic" width="16" height="16" viewBox="0 0 16 16"><path d="M3.1 3.1 L12.9 12.9 M12.9 3.1 L3.1 12.9" fill="none" stroke="#fb7053" stroke-width="2" stroke-linecap="round"/></svg></div>
<div class="c" style="left:1898px;width:69px"><svg class="ic" width="16" height="16" viewBox="0 0 16 16"><path d="M3.1 3.1 L12.9 12.9 M12.9 3.1 L3.1 12.9" fill="none" stroke="#fb7053" stroke-width="2" stroke-linecap="round"/></svg></div>
<div class="c" style="left:1967px;width:54px"><svg class="ic" width="16" height="16" viewBox="0 0 16 16"><path d="M3.1 3.1 L12.9 12.9 M12.9 3.1 L3.1 12.9" fill="none" stroke="#fb7053" stroke-width="2" stroke-linecap="round"/></svg></div>
<div class="c" style="left:2021px;width:158px"><svg class="ic" width="16" height="16" viewBox="0 0 16 16"><path d="M3.1 3.1 L12.9 12.9 M12.9 3.1 L3.1 12.9" fill="none" stroke="#fb7053" stroke-width="2" stroke-linecap="round"/></svg></div>
<div class="c" style="left:2179px;width:88px"><svg class="ic" width="16" height="16" viewBox="0 0 16 16"><path d="M3.1 3.1 L12.9 12.9 M12.9 3.1 L3.1 12.9" fill="none" stroke="#fb7053" stroke-width="2" stroke-linecap="round"/></svg></div>
<div class="c" style="left:2267px;width:79px"><svg class="ic" width="16" height="16" viewBox="0 0 16 16"><path d="M3.1 3.1 L12.9 12.9 M12.9 3.1 L3.1 12.9" fill="none" stroke="#fb7053" stroke-width="2" stroke-linecap="round"/></svg></div>
</div>
</div>
</body></html>
